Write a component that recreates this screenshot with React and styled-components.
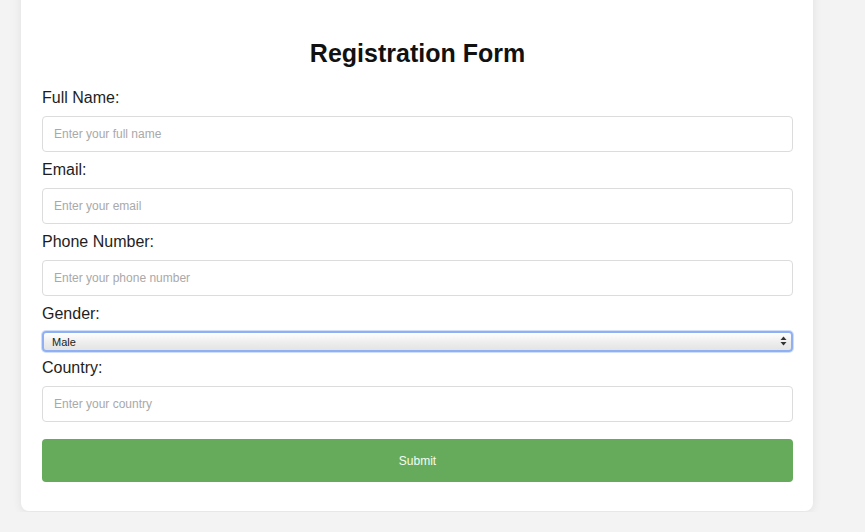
import React from "react";
import styled, { createGlobalStyle } from "styled-components";

const Global = createGlobalStyle`
  * { box-sizing: border-box; }
  html, body { margin: 0; padding: 0; background: #f3f3f3; }
  body { font-family: "Liberation Sans", Arial, sans-serif; color: #1a1a1a; overflow: hidden; }
`;

const Page = styled.div`
  padding: 0 52px 0 21px;
  min-height: 532px;
`;

const Card = styled.form`
  width: 792px;
  margin-top: -20px;
  background: #fff;
  border-radius: 8px;
  box-shadow: 0 2px 10px rgba(0, 0, 0, 0.08);
  padding: 0 20px 29px 21px;
  display: flex;
  flex-direction: column;
`;

const Title = styled.h2`
  margin: 59px 0 22px;
  font-size: 25px;
  line-height: 28px;
  font-weight: 700;
  text-align: center;
  color: #111;
`;

const Label = styled.label`
  display: block;
  font-size: 16px;
  line-height: 18px;
  margin-bottom: 9px;
  color: #1e1e1e;
`;

const Input = styled.input`
  display: block;
  width: 100%;
  height: 36px;
  margin: 0 0 9px;
  padding: 0 11px;
  border: 1px solid #dcdcdc;
  border-radius: 4px;
  font-family: inherit;
  font-size: 12px;
  color: #222;
  background: #fff;
  outline: none;
  &::placeholder { color: #a9a9a9; }
`;

const SelectWrap = styled.div`
  position: relative;
  margin: -1px 0 7px;
`;

const Select = styled.select`
  display: block;
  width: 100%;
  height: 21px;
  padding: 0 0 0 8px;
  appearance: none;
  -webkit-appearance: none;
  border: 2px solid #8fb1f3;
  border-radius: 4px;
  background: linear-gradient(#ffffff, #ececec 60%, #e4e4e4);
  box-shadow: 0 0 0 1px rgba(120, 160, 240, 0.35);
  font-family: inherit;
  font-size: 11px;
  color: #222;
  outline: none;
`;

const Arrows = styled.svg`
  position: absolute;
  right: 6px;
  top: 5px;
  pointer-events: none;
`;

const Button = styled.button`
  margin-top: 8px;
  width: 100%;
  height: 43px;
  border: none;
  border-radius: 4px;
  background: #66ab5b;
  color: #f4fbf2;
  font-family: inherit;
  font-size: 12px;
  cursor: pointer;
`;

const fields = [
  { id: "name", label: "Full Name:", placeholder: "Enter your full name" },
  { id: "email", label: "Email:", placeholder: "Enter your email" },
  { id: "phone", label: "Phone Number:", placeholder: "Enter your phone number" },
];

export default function App() {
  return (
    <>
      <Global />
      <Page>
        <Card onSubmit={(e) => e.preventDefault()}>
          <Title>Registration Form</Title>
          {fields.map((f) => (
            <React.Fragment key={f.id}>
              <Label htmlFor={f.id}>{f.label}</Label>
              <Input id={f.id} placeholder={f.placeholder} />
            </React.Fragment>
          ))}
          <Label htmlFor="gender">Gender:</Label>
          <SelectWrap>
            <Select id="gender" defaultValue="Male">
              <option>Male</option>
              <option>Female</option>
              <option>Other</option>
            </Select>
            <Arrows width="7" height="10" viewBox="0 0 7 10">
              <path d="M3.5 0.5 L6.5 4 L0.5 4 Z" fill="#333" />
              <path d="M3.5 9.5 L6.5 6 L0.5 6 Z" fill="#333" />
            </Arrows>
          </SelectWrap>
          <Label htmlFor="country">Country:</Label>
          <Input id="country" placeholder="Enter your country" />
          <Button type="submit">Submit</Button>
        </Card>
      </Page>
    </>
  );
}
